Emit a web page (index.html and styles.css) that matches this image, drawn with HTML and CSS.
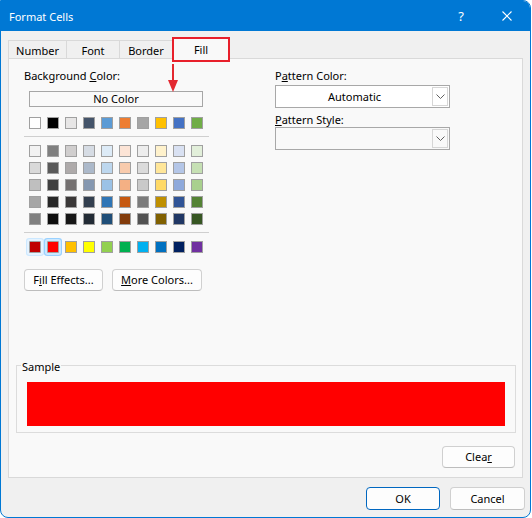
FILE: index.html
```html
<!DOCTYPE html>
<html>
<head>
<meta charset="utf-8">
<title>Format Cells</title>
<link rel="stylesheet" href="styles.css">
</head>
<body>
<div class="window">
  <div class="titlebar">
    <span class="title">Format Cells</span>
    <div class="caption-buttons">
      <span class="cap-btn help">?</span>
      <span class="cap-btn close">
        <svg width="10" height="10" viewBox="0 0 10 10"><path d="M0.5 0.5 L9.5 9.5 M9.5 0.5 L0.5 9.5" stroke="#fff" stroke-width="1.1" fill="none"/></svg>
      </span>
    </div>
  </div>
  <div class="client">
    <div class="tabs">
      <div class="tab t-number">Number</div>
      <div class="tab t-font">Font</div>
      <div class="tab t-border">Border</div>
      <div class="tab t-fill active">Fill</div>
    </div>
    <div class="panel">
      <svg class="arrow" width="10" height="28" viewBox="0 0 10 28">
        <rect x="4" y="0" width="2" height="17" fill="#e32830"/>
        <polygon points="0,16 10,16 5,28" fill="#e32830"/>
      </svg>
      <div class="columns">
        <div class="bgcol">
          <div class="label">Background <u>C</u>olor:</div>
          <div class="nocolor">No Color</div>
          <div class="swatches">
            <span class="sw" style="background:#FFFFFF"></span>
            <span class="sw" style="background:#000000"></span>
            <span class="sw" style="background:#E7E6E6"></span>
            <span class="sw" style="background:#44546A"></span>
            <span class="sw" style="background:#5B9BD5"></span>
            <span class="sw" style="background:#ED7D31"></span>
            <span class="sw" style="background:#A5A5A5"></span>
            <span class="sw" style="background:#FFC000"></span>
            <span class="sw" style="background:#4472C4"></span>
            <span class="sw" style="background:#70AD47"></span>
          </div>
          <div class="sep"></div>
          <div class="grid">
            <span class="sw" style="background:#F2F2F2"></span>
            <span class="sw" style="background:#7F7F7F"></span>
            <span class="sw" style="background:#D0CECE"></span>
            <span class="sw" style="background:#D6DCE4"></span>
            <span class="sw" style="background:#DDEBF7"></span>
            <span class="sw" style="background:#FCE4D6"></span>
            <span class="sw" style="background:#EDEDED"></span>
            <span class="sw" style="background:#FFF2CC"></span>
            <span class="sw" style="background:#D9E1F2"></span>
            <span class="sw" style="background:#E2EFDA"></span>

            <span class="sw" style="background:#D9D9D9"></span>
            <span class="sw" style="background:#595959"></span>
            <span class="sw" style="background:#AEAAAA"></span>
            <span class="sw" style="background:#ACB9CA"></span>
            <span class="sw" style="background:#BDD7EE"></span>
            <span class="sw" style="background:#F8CBAD"></span>
            <span class="sw" style="background:#DBDBDB"></span>
            <span class="sw" style="background:#FFE699"></span>
            <span class="sw" style="background:#B4C6E7"></span>
            <span class="sw" style="background:#C6E0B4"></span>

            <span class="sw" style="background:#BFBFBF"></span>
            <span class="sw" style="background:#404040"></span>
            <span class="sw" style="background:#757171"></span>
            <span class="sw" style="background:#8497B0"></span>
            <span class="sw" style="background:#9BC2E6"></span>
            <span class="sw" style="background:#F4B084"></span>
            <span class="sw" style="background:#C9C9C9"></span>
            <span class="sw" style="background:#FFD966"></span>
            <span class="sw" style="background:#8EA9DB"></span>
            <span class="sw" style="background:#A9D08E"></span>

            <span class="sw" style="background:#A6A6A6"></span>
            <span class="sw" style="background:#262626"></span>
            <span class="sw" style="background:#3A3838"></span>
            <span class="sw" style="background:#333F4F"></span>
            <span class="sw" style="background:#2F75B5"></span>
            <span class="sw" style="background:#C65911"></span>
            <span class="sw" style="background:#7B7B7B"></span>
            <span class="sw" style="background:#BF8F00"></span>
            <span class="sw" style="background:#305496"></span>
            <span class="sw" style="background:#548235"></span>

            <span class="sw" style="background:#808080"></span>
            <span class="sw" style="background:#0D0D0D"></span>
            <span class="sw" style="background:#161616"></span>
            <span class="sw" style="background:#222B35"></span>
            <span class="sw" style="background:#1F4E78"></span>
            <span class="sw" style="background:#833C0C"></span>
            <span class="sw" style="background:#525252"></span>
            <span class="sw" style="background:#806000"></span>
            <span class="sw" style="background:#203764"></span>
            <span class="sw" style="background:#375623"></span>
          </div>
          <div class="sep"></div>
          <div class="swatches standard">
            <span class="sw hover" style="background:#C00000"></span>
            <span class="sw selected" style="background:#FF0000"></span>
            <span class="sw" style="background:#FFC000"></span>
            <span class="sw" style="background:#FFFF00"></span>
            <span class="sw" style="background:#92D050"></span>
            <span class="sw" style="background:#00B050"></span>
            <span class="sw" style="background:#00B0F0"></span>
            <span class="sw" style="background:#0070C0"></span>
            <span class="sw" style="background:#002060"></span>
            <span class="sw" style="background:#7030A0"></span>
          </div>
          <div class="btnrow">
            <button class="btn fill-effects">F<u>i</u>ll Effects...</button>
            <button class="btn more-colors"><u>M</u>ore Colors...</button>
          </div>
        </div>
        <div class="patcol">
          <div class="label">P<u>a</u>ttern Color:</div>
          <div class="combo">
            <span class="combo-text">Automatic</span>
            <span class="combo-btn"><svg width="9" height="5" viewBox="0 0 9 5"><path d="M0.5 0.5 L4.5 4.5 L8.5 0.5" stroke="#606060" fill="none"/></svg></span>
          </div>
          <div class="label style-label"><u>P</u>attern Style:</div>
          <div class="combo disabled">
            <span class="combo-text"></span>
            <span class="combo-btn"><svg width="9" height="5" viewBox="0 0 9 5"><path d="M0.5 0.5 L4.5 4.5 L8.5 0.5" stroke="#606060" fill="none"/></svg></span>
          </div>
        </div>
      </div>
      <div class="sample">
        <span class="sample-label">Sample</span>
        <div class="sample-fill"></div>
      </div>
      <div class="clear-row">
        <button class="btn clear">Clea<u>r</u></button>
      </div>
    </div>
    <div class="footer">
      <button class="btn ok">OK</button>
      <button class="btn cancel">Cancel</button>
    </div>
  </div>
</div>
</body>
</html>
```
FILE: styles.css
```css
html, body {
  margin: 0;
  padding: 0;
  background: #ffffff;
}

body {
  font-family: "Noto Sans", "Liberation Sans", sans-serif;
  font-size: 11px;
  color: #000;
}

.window {
  box-sizing: border-box;
  width: 531px;
  height: 518px;
  border: 1px solid #0078d4;
  border-radius: 0 8px 8px 8px;
  background: #f0f0f0;
  overflow: hidden;
  display: flex;
  flex-direction: column;
}

.titlebar {
  height: 30px;
  background: #0078d4;
  display: flex;
  align-items: center;
  padding-left: 8px;
  color: #fff;
  flex: none;
}

.title {
  font-size: 11px;
  line-height: 15px;
}

.caption-buttons {
  margin-left: auto;
  display: flex;
  height: 100%;
}

.cap-btn {
  width: 46px;
  height: 100%;
  display: flex;
  align-items: center;
  justify-content: center;
}

.help {
  font-size: 13px;
  line-height: 15px;
}

.client {
  flex: 1;
  display: flex;
  flex-direction: column;
}

.tabs {
  margin-top: 6px;
  height: 21px;
  padding-left: 7px;
  display: flex;
  align-items: flex-end;
  position: relative;
  z-index: 2;
}

.tab {
  box-sizing: border-box;
  height: 18px;
  padding-top: 2px;
  line-height: 15px;
  text-align: center;
  border-top: 1px solid #d9d9d9;
  border-left: 1px solid #d9d9d9;
  background: #f0f0f0;
}

.t-number { width: 58px; }
.t-font { width: 53px; }
.t-border { width: 53px; }

.tab.active {
  width: 58px;
  height: 25px;
  margin-bottom: -4px;
  padding-top: 3px;
  border: 2px solid #e8202b;
  background: #f9f9f9;
}

.panel {
  position: relative;
  box-sizing: border-box;
  height: 420px;
  margin-left: 7px;
  width: 515px;
  border: 1px solid #d9d9d9;
  background: #f9f9f9;
  display: flex;
  flex-direction: column;
}

.arrow {
  position: absolute;
  left: 159px;
  top: 5px;
  z-index: 3;
}

.columns {
  display: flex;
  padding-top: 9px;
}

.bgcol {
  margin-left: 15px;
  width: 185px;
}

.label {
  line-height: 15px;
  height: 15px;
}

.nocolor {
  box-sizing: border-box;
  margin-top: 8px;
  margin-left: 5px;
  width: 174px;
  height: 16px;
  border: 1px solid #a6a6a6;
  line-height: 14px;
  text-align: center;
}

.swatches {
  display: flex;
  gap: 6px;
  margin-left: 5px;
  margin-top: 10px;
}

.sw {
  box-sizing: border-box;
  display: block;
  width: 12px;
  height: 12px;
  border: 1px solid #a0a0a0;
  flex: none;
}

.sep {
  margin-top: 7px;
  height: 1px;
  background: #cfcfcf;
}

.grid {
  margin-top: 8px;
  margin-left: 5px;
  display: grid;
  grid-template-columns: repeat(10, 12px);
  column-gap: 6px;
  row-gap: 5px;
}

.swatches.standard {
  margin-top: 8px;
}

.sw.hover {
  box-shadow: 0 0 0 2px #e5f3ff, 0 0 0 3px #cce8ff;
  border-radius: 1px;
}

.sw.selected {
  box-shadow: 0 0 0 2px #cce8ff, 0 0 0 3px #99d1ff;
  border-radius: 1px;
}

.btnrow {
  margin-top: 16px;
  display: flex;
  gap: 9px;
}

.btn {
  box-sizing: border-box;
  font-family: "Noto Sans", "Liberation Sans", sans-serif;
  font-size: 11px;
  color: #000;
  background: #fdfdfd;
  border: 1px solid #d0d0d0;
  border-bottom-color: #bdbdbd;
  border-radius: 4px;
  padding: 0;
  margin: 0;
  height: 22px;
  line-height: 18px;
  text-align: center;
}

.fill-effects { width: 79px; }
.more-colors { width: 90px; }

.patcol {
  margin-left: 66px;
  width: 175px;
}

.combo {
  box-sizing: border-box;
  margin-top: 2px;
  height: 23px;
  border: 1px solid #a8a8a8;
  background: #ffffff;
  display: flex;
  align-items: stretch;
  padding: 1px;
}

.combo.disabled {
  background: #f9f9f9;
}

.combo-text {
  flex: 1;
  text-align: center;
  line-height: 19px;
}

.combo-btn {
  box-sizing: border-box;
  width: 16px;
  border: 1px solid #d6d6d6;
  display: flex;
  align-items: center;
  justify-content: center;
}

.style-label {
  margin-top: 4px;
}

.combo.disabled {
  margin-top: 0;
}

.sample {
  position: relative;
  box-sizing: border-box;
  margin-top: auto;
  margin-left: 7px;
  width: 500px;
  height: 68px;
  border: 1px solid #dcdcdc;
  padding: 16px 10px 6px 10px;
}

.sample-label {
  position: absolute;
  top: -7px;
  left: 4px;
  padding: 0 1px;
  line-height: 15px;
  background: #f9f9f9;
}

.sample-fill {
  height: 44px;
  background: #ff0000;
}

.clear-row {
  display: flex;
  justify-content: flex-end;
  margin-top: 13px;
  margin-bottom: 9px;
  padding-right: 7px;
}

.clear { width: 73px; }

.footer {
  margin-top: 9px;
  display: flex;
  justify-content: flex-end;
  gap: 10px;
  padding-right: 5px;
}

.footer .btn {
  height: 23px;
  line-height: 19px;
}

.ok {
  width: 74px;
  border: 1px solid #0067c0;
}

.cancel { width: 75px; }
```
